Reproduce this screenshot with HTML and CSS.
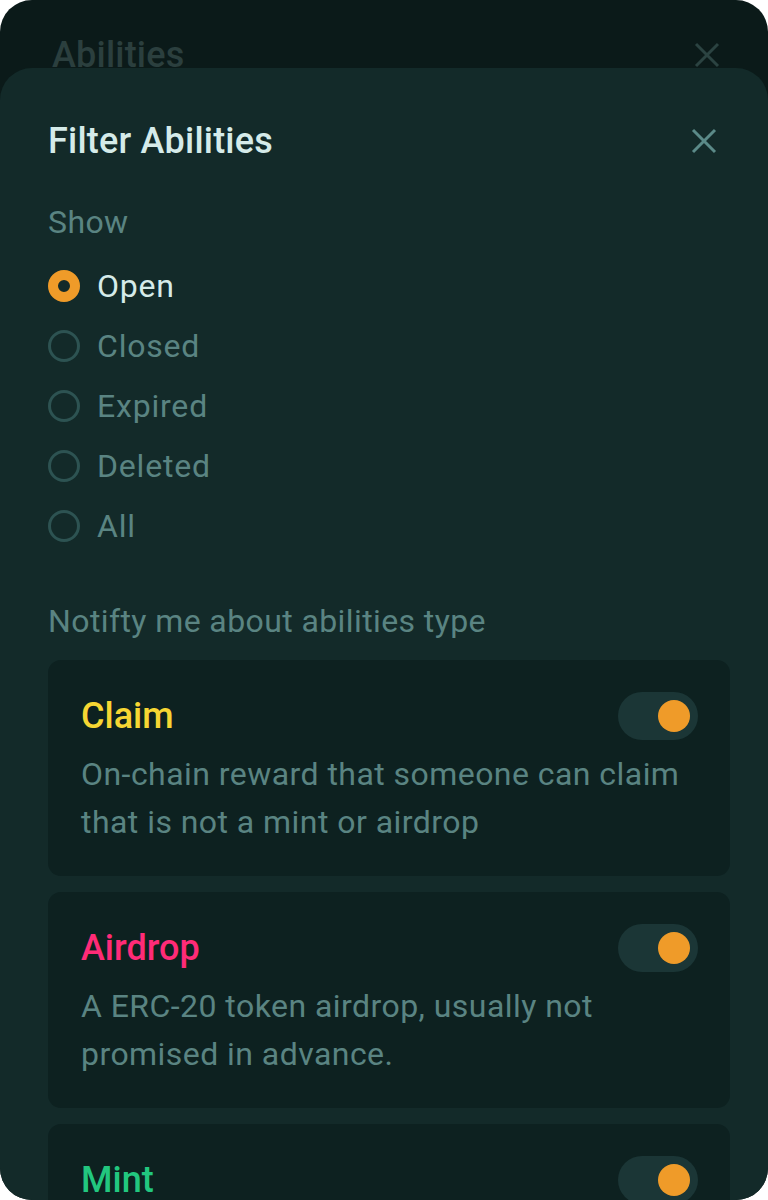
FILE: index.html
```html
<!DOCTYPE html>
<html lang="en">
<head>
<meta charset="utf-8">
<title>Filter Abilities</title>
<link rel="stylesheet" href="styles.css">
</head>
<body>
<div class="frame">
  <div class="back-header">
    <span class="back-title">Abilities</span>
    <svg class="back-close" width="26" height="26" viewBox="0 0 26 26"><path d="M2 2 L24 24 M24 2 L2 24" stroke="currentColor" stroke-width="3" fill="none"/></svg>
  </div>
  <div class="sheet">
    <div class="sheet-header">
      <h1 class="sheet-title">Filter Abilities</h1>
      <svg class="close" width="26" height="26" viewBox="0 0 26 26"><path d="M2 2 L24 24 M24 2 L2 24" stroke="currentColor" stroke-width="3" fill="none"/></svg>
    </div>
    <div class="section-label show-label">Show</div>
    <div class="radios">
      <div class="radio-row selected"><span class="radio"></span><span class="radio-label">Open</span></div>
      <div class="radio-row"><span class="radio"></span><span class="radio-label">Closed</span></div>
      <div class="radio-row"><span class="radio"></span><span class="radio-label">Expired</span></div>
      <div class="radio-row"><span class="radio"></span><span class="radio-label">Deleted</span></div>
      <div class="radio-row"><span class="radio"></span><span class="radio-label">All</span></div>
    </div>
    <div class="section-label notify-label">Notifty me about abilities type</div>
    <div class="cards">
      <div class="card">
        <div class="card-head"><span class="card-title claim">Claim</span><span class="toggle on"><span class="knob"></span></span></div>
        <p class="card-desc">On-chain reward that someone can claim that is not a mint or airdrop</p>
      </div>
      <div class="card">
        <div class="card-head"><span class="card-title airdrop">Airdrop</span><span class="toggle on"><span class="knob"></span></span></div>
        <p class="card-desc">A ERC-20 token airdrop, usually not promised in advance.</p>
      </div>
      <div class="card">
        <div class="card-head"><span class="card-title mint">Mint</span><span class="toggle on"><span class="knob"></span></span></div>
      </div>
    </div>
  </div>
</div>
</body>
</html>
```
FILE: styles.css
```css
* { box-sizing: border-box; }
html, body { margin: 0; padding: 0; background: #ffffff; }
body { font-family: Roboto, "Liberation Sans", sans-serif; }

.frame {
  width: 768px;
  height: 1200px;
  border-radius: 32px;
  background: #0b1a19;
  overflow: hidden;
  display: flex;
  flex-direction: column;
}

.back-header {
  height: 68px;
  flex: none;
  overflow: hidden;
  display: flex;
  justify-content: space-between;
  align-items: flex-start;
  padding: 33px 48px 0 52px;
}
.back-title {
  font-size: 36px;
  line-height: 44px;
  font-weight: 500;
  letter-spacing: 0.2px;
  color: #2b3f3e;
}
.back-close {
  color: #2b4341;
  margin-top: 9px;
}

.sheet {
  flex: 1;
  background: #132a29;
  border-radius: 32px 32px 0 0;
  padding: 51px 38px 0 48px;
  display: flex;
  flex-direction: column;
}

.sheet-header {
  display: flex;
  justify-content: space-between;
  align-items: center;
  height: 44px;
  padding-right: 13px;
}
.sheet-title {
  margin: 0;
  font-size: 36px;
  line-height: 44px;
  font-weight: 500;
  letter-spacing: 0.2px;
  color: #d5ebe9;
}
.close { color: #5b8a88; }

.section-label {
  font-size: 32px;
  line-height: 40px;
  letter-spacing: 0.4px;
  color: #5a8482;
}
.show-label { margin-top: 39px; }
.notify-label { margin-top: 55px; }

.radios {
  margin-top: 24px;
  display: flex;
  flex-direction: column;
  gap: 20px;
}
.radio-row {
  display: flex;
  align-items: center;
  gap: 17px;
  height: 40px;
}
.radio {
  width: 32px;
  height: 32px;
  border-radius: 50%;
  border: 3px solid #2d5352;
  flex: none;
}
.radio-label {
  font-size: 32px;
  line-height: 40px;
  letter-spacing: 0.8px;
  color: #5a8482;
}
.radio-row.selected .radio {
  border: 10px solid #ef9b29;
  background: #132a29;
}
.radio-row.selected .radio-label { color: #d5ebe9; }

.cards {
  margin-top: 19px;
  display: flex;
  flex-direction: column;
  gap: 16px;
}
.card {
  background: #0d2120;
  border-radius: 13px;
  padding: 32px 32px 30px 33px;
}
.card-head {
  display: flex;
  justify-content: space-between;
  align-items: center;
  height: 48px;
}
.card-title {
  font-size: 36px;
  line-height: 48px;
  font-weight: 500;
}
.claim { color: #f6d633; }
.airdrop { color: #ff2b77; }
.mint { color: #22c77f; }

.toggle {
  width: 80px;
  height: 48px;
  border-radius: 24px;
  background: #1b3636;
  display: flex;
  align-items: center;
  justify-content: flex-end;
  padding: 0 8px;
}
.knob {
  width: 32px;
  height: 32px;
  border-radius: 50%;
  background: #ef9b29;
}

.card-desc {
  margin: 10px 0 0 0;
  font-size: 32px;
  line-height: 48px;
  letter-spacing: 0.45px;
  color: #5a8482;
  padding-right: 10px;
}
```
